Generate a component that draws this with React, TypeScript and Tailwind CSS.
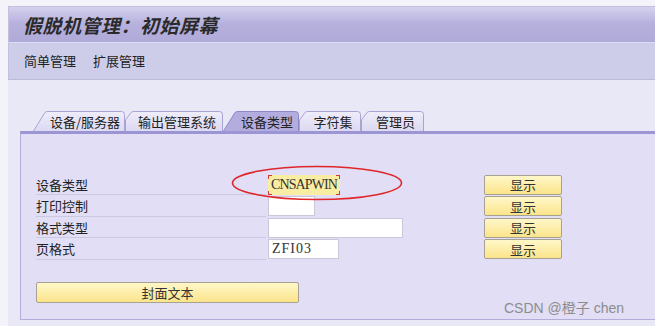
import React from "react";

const cjk = { fontFamily: '"Noto Sans CJK SC", "Liberation Sans", sans-serif' };

type TabProps = { label: string; width: number; first?: boolean; active?: boolean };

function Tab({ label, width, first, active }: TabProps) {
  const w = width;
  const slant = first || active ? 12 : 6;
  const d = first || active
    ? `M0.5,20 L${slant},1.5 Q${slant + 1},0.5 ${slant + 3},0.5 L${w - 3.5},0.5 Q${w - 0.5},0.5 ${w - 0.5},3.5 L${w - 0.5},20`
    : `M0.5,20 L0.5,9 L6,1.5 Q7,0.5 9,0.5 L${w - 3.5},0.5 Q${w - 0.5},0.5 ${w - 0.5},3.5 L${w - 0.5},20`;
  return (
    <div className="relative h-[20px] shrink-0 flex items-center" style={{ width: w }}>
      <svg className="absolute inset-0" width={w} height={20}>
        <defs>
          <linearGradient id="tabg" x1="0" y1="0" x2="0" y2="1">
            <stop offset="0" stopColor="#efedfa" />
            <stop offset="1" stopColor="#dcd9f2" />
          </linearGradient>
        </defs>
        <path d={d} fill={active ? "#b3addf" : "url(#tabg)"} stroke={active ? "#8e87c8" : "#a9a3d2"} strokeWidth="1" />
      </svg>
      <span
        className="relative flex-1 text-center text-[13px] text-[#222] leading-none pt-[1px]"
        style={{ paddingLeft: first || active ? 12 : 6 }}
      >
        {label}
      </span>
    </div>
  );
}

function ShowButton() {
  return (
    <div className="w-[78px] h-[20px] rounded-[2px] border border-[#a6a190] bg-gradient-to-b from-[#fff7c8] to-[#fbe48a] flex items-center justify-center text-[13px] text-[#333] leading-none">
      显示
    </div>
  );
}

function Row({ label, h, children }: { label: string; h: string; children?: React.ReactNode }) {
  return (
    <div className={`flex items-center ${h}`}>
      <div className="w-[230px] h-full flex items-center border-b border-[#cbc8e2] text-[13px] text-[#222] leading-none">
        {label}
      </div>
      <div className="w-[218px] pl-[2px] flex items-center h-full">{children}</div>
      <ShowButton />
    </div>
  );
}

const mono = { fontFamily: '"Liberation Serif", serif', letterSpacing: "-0.9px" };

export default function App() {
  return (
    <div className="relative w-[655px] h-[326px] overflow-hidden bg-[#f4f3fa] flex flex-col" style={cjk}>
      <div className="h-[6px] shrink-0" />
      <div className="flex flex-1">
        <div className="w-[8px] shrink-0" />
        <div className="flex-1 flex flex-col">
          {/* title bar */}
          <div className="h-[36px] shrink-0 border-t border-l border-[#c4bfdd] bg-gradient-to-b from-[#d4d1ef] via-[#b5b0dc] to-[#b0aad9] flex items-center pl-[14px]">
            <span className="text-[19px] font-bold italic text-[#2a2a2a] leading-none tracking-[0.5px]">
              假脱机管理：初始屏幕
            </span>
          </div>
          {/* menu bar */}
          <div className="h-[38px] shrink-0 border-t border-b border-l border-t-[#dedcf2] border-b-[#bdb9d9] border-l-[#c4bfdd] bg-[#cdcde9] flex items-center pl-[15px] gap-[17px] text-[13px] text-[#222]">
            <span>简单管理</span>
            <span>扩展管理</span>
          </div>
          {/* content */}
          <div className="flex-1 bg-[#e9e8f6] pt-[31px] pl-[12px] pb-[6px] flex flex-col">
            <div className="flex pl-[13px] shrink-0">
              <Tab label="设备/服务器" width={92} first />
              <Tab label="输出管理系统" width={98} />
              <Tab label="设备类型" width={76} active />
              <Tab label="字符集" width={62} />
              <Tab label="管理员" width={63} />
            </div>
            <div className="flex-1 border-t-[3px] border-t-[#9c95d3] border-l border-b border-l-[#b3add9] border-b-[#b3add9] bg-[#e1def5] pt-[40px] pl-[15px] flex flex-col">
              <Row label="设备类型" h="h-[21px]">
                <div className="relative w-[72px] h-[20px] bg-[#f8eda2] flex items-center pl-[3px] text-[14px] text-[#333] leading-none" style={mono}>
                  CNSAPWIN
                  <span className="absolute left-0 top-0 w-[4px] h-[4px] border-l border-t border-[#d23a3a]" />
                  <span className="absolute right-0 top-0 w-[4px] h-[4px] border-r border-t border-[#d23a3a]" />
                  <span className="absolute left-0 bottom-0 w-[4px] h-[4px] border-l border-b border-[#d23a3a]" />
                  <span className="absolute right-0 bottom-0 w-[4px] h-[4px] border-r border-b border-[#d23a3a]" />
                </div>
              </Row>
              <Row label="打印控制" h="h-[22px]">
                <div className="w-[47px] h-[20px] bg-white border border-[#c9c7d8]" />
              </Row>
              <Row label="格式类型" h="h-[21px]">
                <div className="w-[135px] h-[20px] bg-white border border-[#c9c7d8]" />
              </Row>
              <Row label="页格式" h="h-[22px]">
                <div
                  className="w-[71px] h-[20px] bg-white border border-[#c9c7d8] flex items-center pl-[3px] text-[14px] text-[#333] leading-none"
                  style={{ fontFamily: '"Liberation Serif", serif', letterSpacing: "1px" }}
                >
                  ZFI03
                </div>
              </Row>
              <div className="mt-[22px] w-[263px] h-[21px] rounded-[2px] border border-[#a6a190] bg-gradient-to-b from-[#fff7c8] to-[#fbe48a] flex items-center justify-center text-[13px] text-[#333] leading-none">
                封面文本
              </div>
            </div>
          </div>
        </div>
      </div>

      {/* red annotation ellipse */}
      <svg className="absolute left-[231px] top-[165px]" width="172" height="36">
        <ellipse cx="86" cy="18" rx="84.5" ry="16.5" fill="none" stroke="#e0262a" strokeWidth="1.6" />
      </svg>

      {/* watermark */}
      <div
        className="absolute left-[504px] top-[301px] text-[14px] text-[#8c8c8c] leading-none whitespace-nowrap"
        style={{ fontFamily: '"Liberation Sans", "Noto Sans CJK SC", sans-serif' }}
      >
        CSDN @橙子 chen
      </div>
    </div>
  );
}
